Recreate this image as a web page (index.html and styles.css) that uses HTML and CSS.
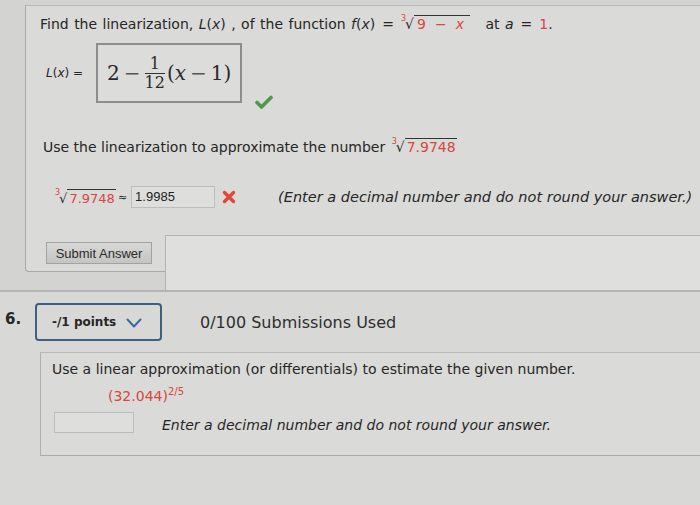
FILE: index.html
```html
<!DOCTYPE html>
<html lang="en">
<head>
    <meta charset="UTF-8" />
    <title>WebAssign - Linearization</title>
    <link rel="stylesheet" href="styles.css">
</head>
<body>
    <div class="question q5">
        <div class="q-body">
            <p class="prompt prompt-1">
                Find the linearization, <i>L</i>(<i>x</i>) , of the function <i>f</i>(<i>x</i>)<span class="eq">=</span><span class="root"><sup>3</sup><span class="radix">√</span><span class="radicand red">9<span class="eq">−</span><i>x</i></span></span>
                at <i>a</i><span class="eq">=</span><span class="red">1</span>.
            </p>

            <div class="answer-row">
                <span class="label"><i>L</i>(<i>x</i>) =</span>
                <div class="math-box">
                    <span>2</span>
                    <span class="op">−</span>
                    <span class="frac"><span class="num">1</span><span class="den">12</span></span>
                    <span>(<i>x</i></span>
                    <span class="op">−</span>
                    <span>1)</span>
                </div>
                <svg class="mark check" width="18" height="14" viewBox="0 0 18 14">
                    <path d="M2 7.5 L6.5 12 L16 2.5" fill="none" stroke="#4c9a48" stroke-width="3.6" stroke-linecap="round" stroke-linejoin="round"/>
                </svg>
            </div>

            <p class="prompt prompt-2">
                Use the linearization to approximate the number
                <span class="root"><sup>3</sup><span class="radix">√</span><span class="radicand red">7.9748</span></span>
            </p>

            <div class="approx-row">
                <span class="root"><sup>3</sup><span class="radix">√</span><span class="radicand red">7.9748</span></span>
                <span class="approx">≈</span>
                <span class="input filled">1.9985</span>
                <svg class="mark cross" width="14" height="14" viewBox="0 0 14 14">
                    <path d="M2.5 2.5 L11.5 11.5 M11.5 2.5 L2.5 11.5" stroke="#e2463b" stroke-width="3.4" stroke-linecap="round"/>
                </svg>
                <span class="hint">(Enter a decimal number and do not round your answer.)</span>
            </div>
        </div>

        <div class="q-foot">
            <div class="submit-cell">
                <button class="submit-button">Submit Answer</button>
            </div>
            <div class="help-cell"></div>
        </div>
    </div>

    <div class="question q6">
        <div class="q-head">
            <span class="q-num">6.</span>
            <div class="points">
                -/1 points
                <svg width="16" height="10" viewBox="0 0 16 10">
                    <path d="M1.5 1.5 L8 8.5 L14.5 1.5" fill="none" stroke="#3b6b9e" stroke-width="2" stroke-linecap="round" stroke-linejoin="round"/>
                </svg>
            </div>
            <span class="submissions">0/100 Submissions Used</span>
        </div>

        <div class="q6-body">
            <p class="prompt">Use a linear approximation (or differentials) to estimate the given number.</p>
            <p class="given"><span class="red">(32.044)</span><sup class="red">2/5</sup></p>
            <div class="entry-row">
                <span class="input empty"></span>
                <span class="hint">Enter a decimal number and do not round your answer.</span>
            </div>
        </div>
    </div>
</body>
</html>
```

FILE: styles.css
```css
* {
    margin: 0;
    padding: 0;
    box-sizing: border-box;
}

body {
    font-family: 'DejaVu Sans', Verdana, sans-serif;
    font-size: 14px;
    color: #262626;
    background: #d3d3d1;
    width: 700px;
    height: 505px;
    overflow: hidden;
}

.red {
    color: #d8463c;
}

.eq {
    margin: 0 7px;
}

/* cube roots */
.root {
    white-space: nowrap;
    font-size: 14px;
}

.root sup {
    font-size: 8px;
    line-height: 0;
    vertical-align: 8px;
    margin-right: -1px;
    color: #d8463c;
}

.radicand {
    display: inline-block;
    border-top: 1px solid #333;
    padding: 1px 1px 0 2px;
    line-height: 15px;
}

/* question 5 */
.q5 {
    margin: 5px 0 0 25px;
}

.q-body {
    height: 230px;
    border-top: 1px solid #b9b9b7;
    border-left: 1px solid #a9a9a7;
    padding: 9px 0 0 14px;
    background: #dadad8;
}

.prompt {
    line-height: 18px;
    height: 18px;
    white-space: nowrap;
}

.prompt-1 {
    word-spacing: 1px;
}

.prompt-1 .root {
    margin: 0 10px 0 0;
}

.prompt-1 .radicand {
    padding: 1px 6px 0 3px;
}

.prompt-1 .radicand .eq {
    margin: 0 9px;
}

.answer-row {
    display: flex;
    align-items: flex-end;
    margin-top: 10px;
    height: 60px;
}

.answer-row .label {
    align-self: center;
    margin: 0 13px 0 6px;
    font-size: 12px;
}

.math-box {
    display: flex;
    align-items: center;
    height: 60px;
    width: 146px;
    padding: 0 9px;
    border: 2px solid #8d8d8b;
    background: #dcdcda;
    font-family: 'DejaVu Serif', 'Liberation Serif', serif;
    font-size: 20px;
    color: #2a2a2a;
}

.math-box .op {
    margin: 0 4px;
    color: #555;
}

.frac {
    display: inline-flex;
    flex-direction: column;
    align-items: center;
    font-size: 16px;
    line-height: 18px;
    margin-right: 2px;
}

.frac .num {
    border-bottom: 1px solid #333;
    width: 100%;
    text-align: center;
}

.mark {
    flex: none;
}

.check {
    margin: 0 0 -6px 13px;
}

.prompt-2 {
    margin-top: 35px;
    padding-left: 3px;
}

.prompt-2 .root {
    margin-left: 2px;
}

.approx-row {
    display: flex;
    align-items: center;
    margin-top: 30px;
    padding-left: 15px;
    height: 22px;
}

.approx-row .root {
    font-size: 13px;
}

.approx {
    margin: 0 4px 0 2px;
    font-size: 11px;
}

.input {
    display: inline-block;
    border: 1px solid #bdbdbb;
    background: #dededc;
}

.input.filled {
    width: 84px;
    height: 22px;
    padding: 2px 3px;
    font-family: 'Liberation Sans', Arial, sans-serif;
    font-size: 13px;
    color: #222;
}

.cross {
    margin-left: 7px;
}

.hint {
    font-style: italic;
    font-size: 14px;
    white-space: nowrap;
}

.approx-row .hint {
    margin-left: 42px;
    font-size: 14.5px;
}

.q-foot {
    display: flex;
    align-items: flex-start;
    height: 55px;
}

.submit-cell {
    width: 140px;
    height: 37px;
    border-left: 1px solid #a9a9a7;
    border-bottom: 1px solid #a9a9a7;
    border-bottom-left-radius: 4px;
    padding: 7px 0 0 20px;
    background: #dadad8;
}

.submit-button {
    font-family: 'Liberation Sans', Arial, sans-serif;
    font-size: 13px;
    color: #2b2b2b;
    width: 106px;
    height: 22px;
    border: 1px solid #a2a2a0;
    background: linear-gradient(#d8d8d6, #c4c4c2);
}

.help-cell {
    flex: 1;
    height: 55px;
    border-top: 1px solid #b3b3b1;
    border-left: 1px solid #b3b3b1;
    background: #dfdfdd;
}

/* question 6 */
.q6 {
    border-top: 2px solid #b4b4b2;
    background: #d8d8d6;
    height: 215px;
}

.q-head {
    display: flex;
    align-items: center;
    height: 60px;
    padding-left: 5px;
}

.q-num {
    font-weight: bold;
    font-size: 15px;
    width: 30px;
    margin-top: -6px;
}

.points {
    display: flex;
    align-items: center;
    gap: 10px;
    width: 127px;
    height: 38px;
    padding-left: 15px;
    border: 2px solid #3f5f7e;
    border-radius: 4px;
    font-weight: bold;
    font-size: 12px;
}

.points svg {
    margin-top: 2px;
}

.submissions {
    margin-left: 38px;
    font-size: 16px;
    color: #2e2e2e;
}

.q6-body {
    margin-left: 40px;
    border-top: 1px solid #b9b9b7;
    border-left: 1px solid #b0b0ae;
    border-bottom: 1px solid #a9a9a7;
    padding: 7px 0 0 11px;
    height: 104px;
    background: #dadad8;
}

.given {
    margin: 6px 0 0 56px;
    line-height: 16px;
}

.given sup {
    font-size: 10px;
    vertical-align: 6px;
}

.entry-row {
    display: flex;
    align-items: center;
    margin-top: 8px;
}

.input.empty {
    width: 80px;
    height: 21px;
    margin-left: 2px;
}

.entry-row .hint {
    margin-left: 28px;
    margin-top: 5px;
}
```
